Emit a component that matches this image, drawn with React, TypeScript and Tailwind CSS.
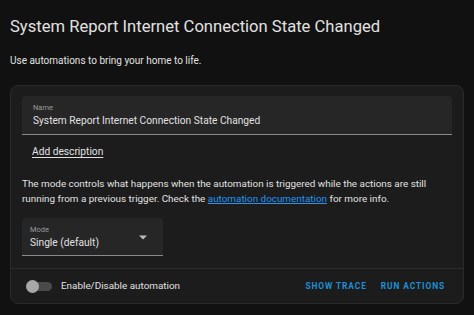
import React from "react";

const App = () => {
  return (
    <div
      className="w-[474px] h-[315px] bg-[#111111] text-[#e1e1e1] overflow-hidden"
      style={{ fontFamily: "Roboto, 'Liberation Sans', sans-serif" }}
    >
      <div className="px-[10px] pt-[15px]">
        <h1 className="text-[16.6px] leading-[24px] font-normal">
          System Report Internet Connection State Changed
        </h1>
        <p className="mt-[15px] text-[10px] leading-[14px]">Use automations to bring your home to life.</p>

        <div className="mt-[17px] h-[219px] rounded-[8px] border border-[#2a2a2a] bg-[#1c1c1c] flex flex-col">
          <div className="px-[11px] pt-[10px]">
            <div className="h-[39px] bg-[#262626] rounded-t-[4px] border-b border-[#8a8a8a] px-[11px] pt-[7px]">
              <div className="text-[7.5px] leading-[10px] text-[#9a9a9a]">Name</div>
              <div className="text-[10.2px] leading-[14px] mt-[1px]">System Report Internet Connection State Changed</div>
            </div>
            <div className="mt-[10px] pl-[10px] text-[10.2px] leading-[14px] underline underline-offset-2">
              Add description
            </div>
            <p className="mt-[17px] text-[9.9px] leading-[15px]">
              The mode controls what happens when the automation is triggered while the actions are still running from
              a previous trigger. Check the{" "}
              <span className="text-[#2196f3] underline">automation documentation</span> for more info.
            </p>
            <div className="mt-[12px] w-[141px] h-[38px] bg-[#262626] rounded-t-[4px] border-b border-[#8a8a8a] px-[8px] pt-[7px] flex">
              <div className="flex-1">
                <div className="text-[7.5px] leading-[10px] text-[#9a9a9a]">Mode</div>
                <div className="text-[10.2px] leading-[14px] mt-[1px]">Single (default)</div>
              </div>
              <svg width="8" height="5" viewBox="0 0 10 5" className="mt-[10px] mr-[8px]">
                <path d="M0 0 L10 0 L5 5 Z" fill="#bdbdbd" />
              </svg>
            </div>
          </div>
          <div className="mt-[12px] border-t border-[#2c2c2c] flex-1 flex items-center pl-[15px] pr-[18px]">
            <div className="relative w-[26px] h-[14px] flex items-center">
              <div className="w-[24px] h-[9px] ml-[2px] rounded-full bg-[#4a4a4a]" />
              <div className="absolute left-0 top-[0.5px] w-[13px] h-[13px] rounded-full bg-[#a8a8a8]" />
            </div>
            <span className="ml-[9px] text-[9.9px]">Enable/Disable automation</span>
            <div className="ml-auto flex items-center gap-[14px] text-[8.4px] font-bold tracking-[0.9px] text-[#1e8fd6]">
              <span>SHOW TRACE</span>
              <span>RUN ACTIONS</span>
            </div>
          </div>
        </div>
      </div>
    </div>
  );
};

export default App;
